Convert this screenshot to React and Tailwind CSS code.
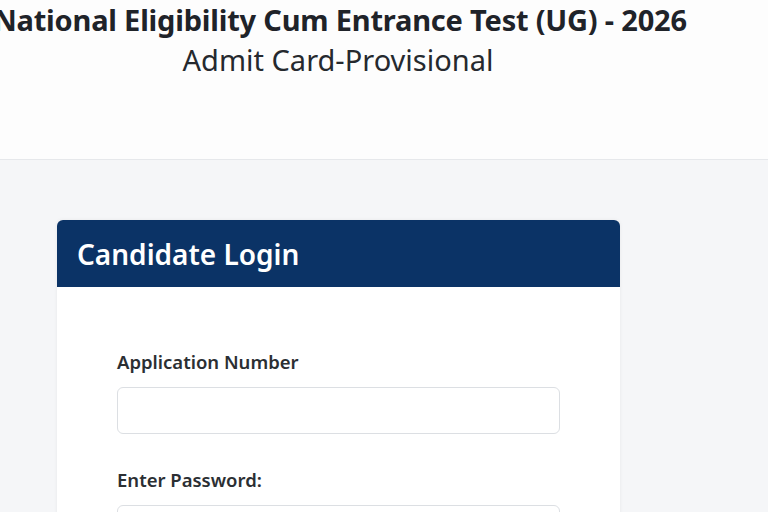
export default function App() {
    const font = { fontFamily: '"Noto Sans", "Open Sans", sans-serif' };

    return (
        <div className="min-h-[512px] bg-[#f5f6f8] overflow-hidden" style={font}>
            <div className="bg-[#fdfdfd] border-b border-[#e6e8eb] h-[160px]">
                <div className="w-[680px] text-center pt-[1px]">
                    <h1 className="text-[29px] leading-[38px] font-bold text-[#1f2329] whitespace-nowrap tracking-[-0.2px] -ml-[8px] -mr-[8px]">
                        National Eligibility Cum Entrance Test (UG) - 2026
                    </h1>
                    <h2 className="text-[29px] leading-[42px] font-normal text-[#25292e] -ml-[4px]">
                        Admit Card-Provisional
                    </h2>
                </div>
            </div>

            <div className="pt-[60px] pl-[57px]">
                <div className="w-[563px] bg-white rounded-t-[6px] shadow-[0_0_4px_rgba(0,0,0,0.06)]">
                    <div className="bg-[#0b3366] rounded-t-[6px] h-[67px] flex items-center px-[20px]">
                        <h3 className="text-[28px] font-semibold text-white">Candidate Login</h3>
                    </div>
                    <div className="px-[60px] pt-[62px] pb-10">
                        <div className="mb-[33px]">
                            <label className="block text-[18.5px] font-semibold text-[#2b2f33] mb-[12px] leading-[26px]">
                                Application Number
                            </label>
                            <input className="w-full h-[47px] rounded-[6px] border border-[#dcdfe3] bg-white px-3 outline-none" />
                        </div>
                        <div>
                            <label className="block text-[18.5px] font-semibold text-[#2b2f33] mb-[12px] leading-[26px]">
                                Enter Password:
                            </label>
                            <input type="password" className="w-full h-[47px] rounded-[6px] border border-[#dcdfe3] bg-white px-3 outline-none" />
                        </div>
                    </div>
                </div>
            </div>
        </div>
    );
}
